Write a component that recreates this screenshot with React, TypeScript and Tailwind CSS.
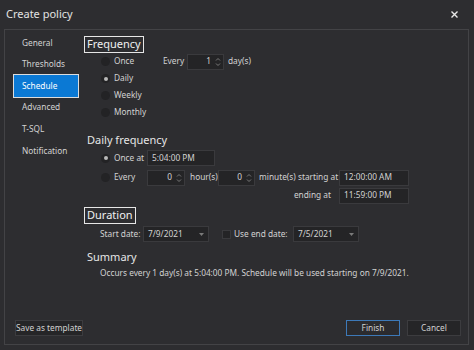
import React from "react"

const nav = ["General", "Thresholds", "Schedule", "Advanced", "T-SQL", "Notification"]

function Radio({ checked, label, w }: { checked?: boolean; label: string; w: string }) {
  return (
    <div className={`flex items-center ${w}`}>
      <span className="w-[9px] h-[9px] rounded-full bg-[#232325] flex items-center justify-center">
        {checked && <span className="w-[4px] h-[4px] rounded-full bg-[#b9b9b9]" />}
      </span>
      <span className="ml-[4px]">{label}</span>
    </div>
  )
}

function Arrows() {
  return (
    <svg width="6" height="12" viewBox="0 0 6 12" className="shrink-0">
      <path d="M1 4.5 L3 2.5 L5 4.5" fill="none" stroke="#7a7a7a" strokeWidth="1" />
      <path d="M1 7.5 L3 9.5 L5 7.5" fill="none" stroke="#7a7a7a" strokeWidth="1" />
    </svg>
  )
}

function Spin({ value, w }: { value: string; w: string }) {
  return (
    <div className={`h-[16px] ${w} bg-[#242426] border border-[#3a3a3d] flex items-center justify-end pr-[2px]`}>
      <span className="mr-[4px]">{value}</span>
      <Arrows />
    </div>
  )
}

function Field({ value, w }: { value: string; w: string }) {
  return (
    <div className={`h-[16px] ${w} bg-[#242426] border border-[#3a3a3d] flex items-center pl-[4px]`}>
      {value}
    </div>
  )
}

function Combo({ value }: { value: string }) {
  return (
    <div className="h-[16px] w-[66px] bg-[#242426] border border-[#3a3a3d] flex items-center justify-between pl-[4px] pr-[4px]">
      <span>{value}</span>
      <svg width="5" height="3" viewBox="0 0 5 3">
        <path d="M0 0 L5 0 L2.5 3 Z" fill="#7a7a7a" />
      </svg>
    </div>
  )
}

function BoxTitle({ children }: { children: React.ReactNode }) {
  return (
    <div className="inline-flex h-[17px] items-center border border-[#e6e6e6] px-[2px] text-[11px] text-[#f0f0f0]">
      {children}
    </div>
  )
}

export default function App() {
  return (
    <div className="w-[474px] h-[350px] bg-[#2d2d30] text-[#d2d2d2] text-[8.3px] font-['Noto_Sans',sans-serif] whitespace-nowrap flex flex-col overflow-hidden">
      <div className="h-[29px] flex items-center justify-between pl-[6px] pr-[16px]">
        <span className="text-[11px] text-[#e2e2e2]">Create policy</span>
        <svg width="7" height="7" viewBox="0 0 7 7">
          <path d="M0.5 0.5 L6.5 6.5 M6.5 0.5 L0.5 6.5" stroke="#e8e8e8" strokeWidth="1.4" />
        </svg>
      </div>

      <div className="ml-[4px] w-[465px] h-[316px] border border-[#434346] flex flex-col">
        <div className="flex">
          <div className="w-[79px] pl-[8px] pt-[2px]">
            {nav.map((n) =>
              n === "Schedule" ? (
                <div
                  key={n}
                  className="h-[24px] -my-[1.2px] w-[66px] bg-[#0b79d4] border border-[#dcdcdc] flex items-center pl-[8px] text-white"
                >
                  {n}
                </div>
              ) : (
                <div key={n} className="h-[21.6px] flex items-center pl-[9px]">
                  {n}
                </div>
              )
            )}
          </div>

          <div className="flex-1 pt-[6px]">
            <BoxTitle>Frequency</BoxTitle>
            <div className="ml-[17px]">
              <div className="h-[17px] flex items-center">
                <Radio label="Once" w="w-[62px]" />
                <span className="w-[24px]">Every</span>
                <Spin value="1" w="w-[37px]" />
                <span className="ml-[4px]">day(s)</span>
              </div>
              <div className="h-[17px] flex items-center">
                <Radio checked label="Daily" w="w-[62px]" />
              </div>
              <div className="h-[17px] flex items-center">
                <Radio label="Weekly" w="w-[62px]" />
              </div>
              <div className="h-[17px] flex items-center">
                <Radio label="Monthly" w="w-[62px]" />
              </div>
            </div>

            <div className="mt-[11px] h-[16px] flex items-center pl-[3px] text-[11px] text-[#e6e6e6]">Daily frequency</div>

            <div className="ml-[17px]">
              <div className="h-[20px] flex items-center">
                <Radio checked label="Once at" w="w-[46px]" />
                <Field value="5:04:00 PM" w="w-[68px]" />
              </div>
              <div className="h-[19px] flex items-center">
                <Radio label="Every" w="w-[46px]" />
                <Spin value="0" w="w-[38px]" />
                <span className="ml-[5px] w-[28px]">hour(s)</span>
                <Spin value="0" w="w-[37px]" />
                <span className="ml-[4px] w-[80px]">minute(s) starting at</span>
                <Field value="12:00:00 AM" w="w-[70px]" />
              </div>
              <div className="h-[17px] flex items-center">
                <span className="ml-[158px] w-[80px] text-right pr-[8px]">ending at</span>
                <Field value="11:59:00 PM" w="w-[70px]" />
              </div>
            </div>

            <div className="mt-[3px]">
              <BoxTitle>Duration</BoxTitle>
            </div>
            <div className="ml-[16px] mt-[1px] h-[18px] flex items-center">
              <span className="w-[43px]">Start date:</span>
              <Combo value="7/9/2021" />
              <span className="ml-[13px] w-[9px] h-[9px] bg-[#242426] border border-[#3a3a3d]" />
              <span className="ml-[3px] w-[59px]">Use end date:</span>
              <Combo value="7/5/2021" />
            </div>

            <div className="mt-[6px] h-[16px] flex items-center pl-[3px] text-[11px] text-[#e6e6e6]">Summary</div>
            <div className="mt-[2px] h-[12px] flex items-center pl-[16px]">
              Occurs every 1 day(s) at 5:04:00 PM. Schedule will be used starting on 7/9/2021.
            </div>
          </div>
        </div>

        <div className="flex-1" />
        <div className="flex items-center pl-[10px] pr-[7px] pb-[8px]">
          <button className="h-[16px] w-[68px] bg-[#252527] border border-[#3c3c3f]">Save as template</button>
          <div className="flex-1" />
          <button className="h-[16px] w-[54px] bg-[#2b2b2e] border border-[#3d79b8]">Finish</button>
          <button className="ml-[7px] h-[16px] w-[54px] bg-[#252527] border border-[#3c3c3f]">Cancel</button>
        </div>
      </div>
    </div>
  )
}
